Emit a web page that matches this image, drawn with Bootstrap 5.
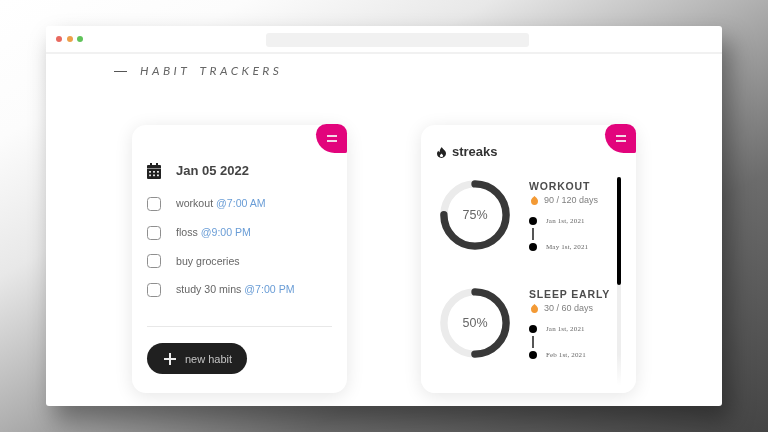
<!DOCTYPE html>
<html lang="en">
<head>
<meta charset="utf-8">
<title>Habit trackers</title>
<link rel="stylesheet" href="https://cdn.jsdelivr.net/npm/bootstrap@5.3.0/dist/css/bootstrap.min.css">
<style>
html,body{height:432px;overflow:hidden}
body{width:768px;padding:26px 46px;font-family:"Liberation Sans",Arial,sans-serif;background:linear-gradient(to bottom right,#fff 0%,#fcfcfc 16%,#e8e8e8 32%,#aeaeae 50%,#6c6c6c 70%,#444 100%)}
.app-window{width:676px;height:380px;background:#fff;border-radius:3px;box-shadow:8px 14px 24px rgba(0,0,0,.38);overflow:hidden;filter:blur(.3px)}
.title-strip{height:28px;border-bottom:2px solid #f1f1f1;padding:0 10px}
.win-dots{gap:4.5px}
.win-dot{width:6px;height:6px;border-radius:50%}
.url-pill{width:263px;height:14px;background:#f1f1f1;border-radius:3px;margin-left:183px;margin-top:1px}
.page-head{padding-left:68px;height:34px;margin-bottom:37px;font-size:12px;letter-spacing:.285em;color:#666;font-style:italic;font-family:Lato,sans-serif;font-weight:400;word-spacing:.32em}
.head-rule{width:13px;height:1px;background:#555;margin-right:13px}
.cards-row{padding-left:86px;gap:74px}
.panel-card{width:215px;height:268px;border-radius:14px;box-shadow:0 3px 18px rgba(0,0,0,.1);position:relative;background:#fff}
.menu-blob{position:absolute;top:-1px;right:0;width:31px;height:29px;background:#e2047c;border-radius:11px 10px 2px 20px;display:flex;flex-direction:column;align-items:center;justify-content:center;gap:2.5px}
.menu-blob i{display:block;width:10px;height:2.5px;background:#f3d8e6}
.left-body{padding:37px 15px 0}
.date-line{font-size:13px;font-weight:700;color:#444;gap:15px;height:18px;line-height:18px;margin-bottom:10px}
.task-item{height:28.6px;font-size:10.6px;color:#666;gap:15px}
.check-box{width:14px;height:14px;border:1.7px solid #8f8f8f;border-radius:3.5px;flex:none}
.time-tag{color:#6a9dd6}
.sep-line{border-top:1px solid #e8e8e8;margin-top:22px;margin-bottom:16px}
.add-pill{width:100px;height:31px;border-radius:16px;background:#202020;color:#c4c4c4;font-size:11px;gap:8px;padding-left:16px}
.right-body{padding:19px 0 0 14px;height:100%;position:relative;overflow:hidden;border-radius:14px}
.streak-title{font-size:13px;font-weight:700;color:#333;gap:6px;line-height:16px;margin-bottom:18px;padding-left:2px}
.streak-entry{height:108px;gap:19px}
.ring-box{width:70px;height:70px;flex:none;margin-left:5px;margin-top:2px;position:relative}
.ring-box svg{display:block}
.ring-label{position:absolute;inset:0;display:flex;align-items:center;justify-content:center;font-size:12.5px;color:#666}
.entry-text{padding-top:2px}
.entry-name{font-size:10.5px;font-weight:700;letter-spacing:.08em;color:#4c4c4c;line-height:13px}
.entry-days{font-size:9px;color:#808080;line-height:13px;gap:6px;margin-bottom:9px;margin-top:1px;padding-left:2px}
.tl-row{gap:9px;height:10px;font-family:"Liberation Serif",serif;font-size:7px;letter-spacing:.15px;color:#666;line-height:10px}
.tl-dot{width:8px;height:8px;border-radius:50%;background:#000;flex:none}
.tl-bar{width:2px;height:11.500px;background:#555;margin:2px 0 2px 3px}
.scroll-track{position:absolute;top:52px;right:15px;width:4px;height:209px;background:linear-gradient(#eee 85%,#fff)}
.scroll-thumb{width:4px;height:108px;background:#000;border-radius:2px}
.fade-foot{position:absolute;left:0;right:0;bottom:0;height:34px;background:linear-gradient(rgba(255,255,255,.3),#fff)}
</style>
</head>
<body>
<div class="app-window">
  <div class="title-strip d-flex align-items-center">
    <div class="win-dots d-flex">
      <span class="win-dot" style="background:#e8695f"></span>
      <span class="win-dot" style="background:#eda04a"></span>
      <span class="win-dot" style="background:#5fc35a"></span>
    </div>
    <div class="url-pill"></div>
  </div>
  <div class="page-head d-flex align-items-center">
    <span class="head-rule"></span><span>HABIT TRACKERS</span>
  </div>
  <div class="cards-row d-flex">
    <div class="panel-card">
      <div class="menu-blob"><i></i><i></i></div>
      <div class="left-body">
        <div class="date-line d-flex align-items-center">
          <svg width="14" height="16" viewBox="0 0 14 16"><path fill="#222" d="M3 0h2v2h4V0h2v2h2a1 1 0 0 1 1 1v2.300H0V3a1 1 0 0 1 1-1h2zM0 5.800h14V15a1 1 0 0 1-1 1H1a1 1 0 0 1-1-1z"/><g fill="#fff"><rect x="2.200" y="8" width="1.700" height="1.700"/><rect x="6.150" y="8" width="1.700" height="1.700"/><rect x="10.100" y="8" width="1.700" height="1.700"/><rect x="2.200" y="11.500" width="1.700" height="1.700"/><rect x="6.150" y="11.500" width="1.700" height="1.700"/><rect x="10.100" y="11.500" width="1.700" height="1.700"/></g></svg>
          <span>Jan 05 2022</span>
        </div>
        <div class="task-item d-flex align-items-center"><span class="check-box"></span><span>workout <span class="time-tag">@7:00 AM</span></span></div>
        <div class="task-item d-flex align-items-center"><span class="check-box"></span><span>floss <span class="time-tag">@9:00 PM</span></span></div>
        <div class="task-item d-flex align-items-center"><span class="check-box"></span><span>buy groceries</span></div>
        <div class="task-item d-flex align-items-center"><span class="check-box"></span><span>study 30 mins <span class="time-tag">@7:00 PM</span></span></div>
        <div class="sep-line"></div>
        <div class="add-pill d-flex align-items-center">
          <svg width="14" height="14" viewBox="0 0 14 14"><path stroke="#eee" stroke-width="2" d="M7 1v12M1 7h12"/></svg>
          <span>new habit</span>
        </div>
      </div>
    </div>
    <div class="panel-card">
      <div class="menu-blob"><i></i><i></i></div>
      <div class="right-body">
        <div class="streak-title d-flex align-items-center">
          <svg width="9" height="11" viewBox="0 0 10 12"><path fill="#222" fill-rule="evenodd" d="M5.500 0c0 2 4.500 3.500 4.500 7.200C10 10 7.800 12 5 12S0 10 0 7.400c0-1.400.7-2.500 1.700-3.300.1.800.5 1.400 1.100 1.700C2.900 3.700 4 1.300 5.500 0zM5 7C4 8 3.200 8.800 3.200 9.600 3.200 10.400 4 11 5 11s1.800-.6 1.800-1.400C6.800 8.800 6 8 5 7z"/></svg>
          <span>streaks</span>
        </div>
        <div class="streak-entry d-flex">
          <div class="ring-box">
            <svg width="70" height="70" viewBox="0 0 72 72"><circle cx="36" cy="36" r="32" fill="none" stroke="#ebebeb" stroke-width="7.600"/><circle cx="36" cy="36" r="32" fill="none" stroke="#383838" stroke-width="7.600" stroke-linecap="round" stroke-dasharray="150.800 201.100" transform="rotate(-90 36 36)"/></svg>
            <span class="ring-label">75%</span>
          </div>
          <div class="entry-text">
            <div class="entry-name">WORKOUT</div>
            <div class="entry-days d-flex align-items-center"><svg width="7" height="9" viewBox="0 0 7 9"><path fill="#f39a35" d="M3.500 0c.5.800 3.500 2.400 3.500 5a3.500 4 0 0 1-7 0C0 2.400 3 .8 3.500 0z"/></svg><span>90 / 120 days</span></div>
            <div class="tl-row d-flex align-items-center"><span class="tl-dot"></span><span>Jan 1st, 2021</span></div>
            <div class="tl-bar"></div>
            <div class="tl-row d-flex align-items-center"><span class="tl-dot"></span><span>May 1st, 2021</span></div>
          </div>
        </div>
        <div class="streak-entry d-flex">
          <div class="ring-box">
            <svg width="70" height="70" viewBox="0 0 72 72"><circle cx="36" cy="36" r="32" fill="none" stroke="#ebebeb" stroke-width="7.600"/><circle cx="36" cy="36" r="32" fill="none" stroke="#383838" stroke-width="7.600" stroke-linecap="round" stroke-dasharray="100.500 201.100" transform="rotate(-90 36 36)"/></svg>
            <span class="ring-label">50%</span>
          </div>
          <div class="entry-text">
            <div class="entry-name">SLEEP EARLY</div>
            <div class="entry-days d-flex align-items-center"><svg width="7" height="9" viewBox="0 0 7 9"><path fill="#f39a35" d="M3.500 0c.5.800 3.500 2.400 3.500 5a3.500 4 0 0 1-7 0C0 2.400 3 .8 3.500 0z"/></svg><span>30 / 60 days</span></div>
            <div class="tl-row d-flex align-items-center"><span class="tl-dot"></span><span>Jan 1st, 2021</span></div>
            <div class="tl-bar"></div>
            <div class="tl-row d-flex align-items-center"><span class="tl-dot"></span><span>Feb 1st, 2021</span></div>
          </div>
        </div>
        <div class="fade-foot"></div>
        <div class="scroll-track"><div class="scroll-thumb"></div></div>
      </div>
    </div>
  </div>
</div>
<script src="https://cdn.jsdelivr.net/npm/bootstrap@5.3.0/dist/js/bootstrap.bundle.min.js"></script>
</body>
</html>
